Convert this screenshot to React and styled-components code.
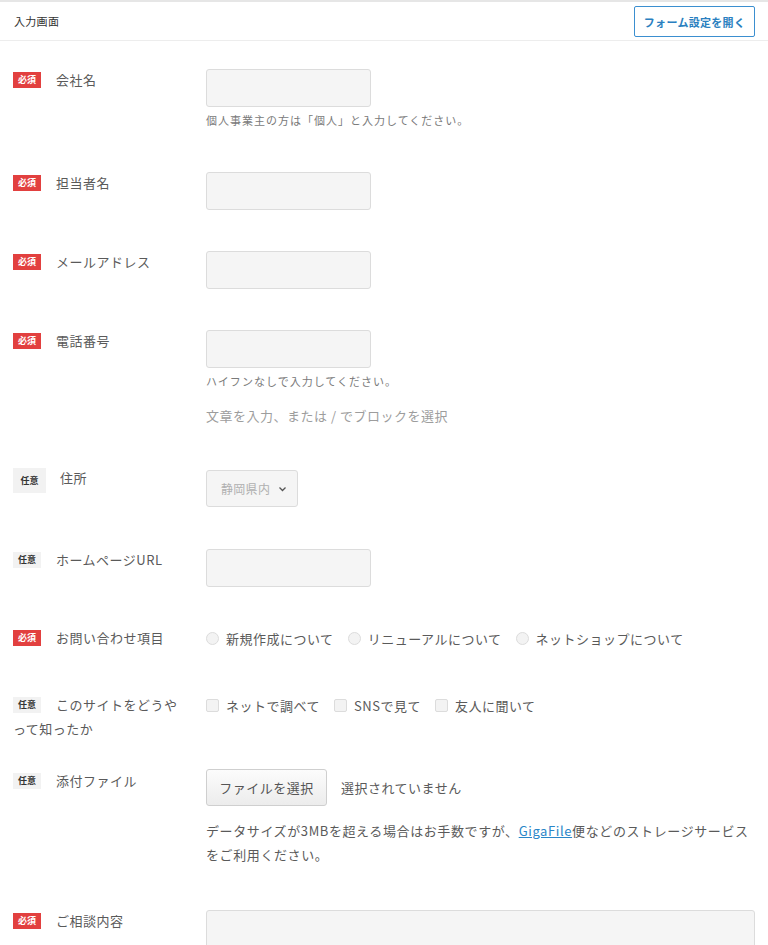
import React from "react";
import styled, { createGlobalStyle, css } from "styled-components";

const GlobalStyle = createGlobalStyle`
  html, body {
    margin: 0;
    padding: 0;
    background: #ffffff;
  }
  body {
    font-family: "Noto Sans CJK JP", "Noto Sans", sans-serif;
    color: #444;
  }
`;

const Header = styled.div`
  height: 38px;
  border-top: 2px solid #e6e6e6;
  border-bottom: 1px solid #ededed;
  display: flex;
  align-items: center;
  justify-content: space-between;
  padding: 0 13px 0 14px;
`;

const Title = styled.div`
  font-size: 11px;
  color: #333;
  letter-spacing: 0.3px;
`;

const OpenButton = styled.button`
  width: 121px;
  height: 31px;
  margin-top: 1px;
  border: 1px solid #3b8fd0;
  border-radius: 2px;
  background: #fff;
  color: #2a7fc0;
  font-family: inherit;
  font-size: 11px;
  font-weight: 700;
  letter-spacing: 0.3px;
  padding: 0;
`;

const Form = styled.div`
  display: flex;
  flex-direction: column;
  padding: 27px 13px 0 13px;
`;

const Row = styled.div`
  display: flex;
  align-items: flex-start;
  margin-bottom: ${(p) => p.$mb}px;
`;

const Label = styled.div`
  width: 175px;
  flex-shrink: 0;
  font-size: 13px;
  line-height: 24px;
  letter-spacing: 0.5px;
  color: #5a5a5a;
`;

const Badge = styled.span`
  display: inline-block;
  vertical-align: middle;
  width: 28px;
  height: 16px;
  line-height: 16px;
  margin: -3px 15px 0 0;
  text-align: center;
  font-size: 9px;
  font-weight: 700;
  letter-spacing: 0;
  ${(p) =>
    p.$required
      ? css`
          background: #e2403f;
          color: #fff;
        `
      : css`
          background: #f2f2f2;
          color: #333;
        `}
  ${(p) =>
    p.$large &&
    css`
      width: 33px;
      height: 25px;
      line-height: 25px;
      margin: 2px 14px 0 0;
      vertical-align: top;
    `}
`;

const Field = styled.div`
  flex: 1;
  margin-left: 18px;
  display: flex;
  flex-direction: column;
  align-items: flex-start;
`;

const TextInput = styled.div`
  width: 165px;
  height: 38px;
  box-sizing: border-box;
  margin-top: 1px;
  background: #f5f5f5;
  border: 1px solid #dcdcdc;
  border-radius: 3px;
`;

const Help = styled.div`
  margin-top: 4px;
  font-size: 11px;
  line-height: 18px;
  letter-spacing: 1px;
  color: #7a7a7a;
`;

const Placeholder = styled.div`
  margin-top: 15px;
  font-size: 13px;
  line-height: 22px;
  letter-spacing: 0.5px;
  color: #9d9d9d;
`;

const Select = styled.div`
  width: 92px;
  height: 37px;
  box-sizing: border-box;
  margin-top: 4px;
  background: #f5f5f5;
  border: 1px solid #dcdcdc;
  border-radius: 3px;
  display: flex;
  align-items: center;
  justify-content: space-between;
  padding: 0 10px 0 14px;
  font-size: 12px;
  letter-spacing: 0.3px;
  color: #b0b0b0;
`;

const Options = styled.div`
  display: flex;
  align-items: center;
  gap: 14px;
  height: 24px;
`;

const Option = styled.label`
  display: flex;
  align-items: center;
  gap: 7px;
  font-size: 13px;
  letter-spacing: 0.5px;
  color: #5a5a5a;
  white-space: nowrap;
`;

const Mark = styled.span`
  width: 13px;
  height: 13px;
  box-sizing: border-box;
  background: #f3f3f3;
  border: 1px solid #dcdcdc;
  border-radius: ${(p) => (p.$round ? "50%" : "2px")};
`;

const FileLine = styled.div`
  display: flex;
  align-items: center;
  gap: 14px;
  font-size: 13px;
  letter-spacing: 0.5px;
  color: #5a5a5a;
`;

const FileButton = styled.div`
  width: 121px;
  height: 37px;
  box-sizing: border-box;
  border: 1px solid #cfcfcf;
  border-radius: 3px;
  background: linear-gradient(#fcfcfc, #ececec);
  display: flex;
  align-items: center;
  justify-content: center;
  font-size: 13px;
  color: #555;
`;

const Note = styled.div`
  margin-top: 13px;
  font-size: 13px;
  line-height: 24px;
  letter-spacing: 0.6px;
  color: #5a5a5a;

  a {
    color: #2a86c8;
    text-decoration: underline;
  }
`;

const TextArea = styled.div`
  width: 100%;
  height: 120px;
  box-sizing: border-box;
  margin-top: 1px;
  background: #f5f5f5;
  border: 1px solid #dcdcdc;
  border-radius: 3px;
`;

function Chevron() {
  return (
    <svg width="9" height="6" viewBox="0 0 9 6">
      <path d="M1.5 1.5 L4.5 4.5 L7.5 1.5" fill="none" stroke="#555" strokeWidth="1.3" />
    </svg>
  );
}

export default function App() {
  return (
    <>
      <GlobalStyle />
      <Header>
        <Title>入力画面</Title>
        <OpenButton>フォーム設定を開く</OpenButton>
      </Header>
      <Form>
        <Row $mb={42}>
          <Label>
            <Badge $required>必須</Badge>会社名
          </Label>
          <Field>
            <TextInput />
            <Help>個人事業主の方は「個人」と入力してください。</Help>
          </Field>
        </Row>

        <Row $mb={40}>
          <Label>
            <Badge $required>必須</Badge>担当者名
          </Label>
          <Field>
            <TextInput />
          </Field>
        </Row>

        <Row $mb={40}>
          <Label>
            <Badge $required>必須</Badge>メールアドレス
          </Label>
          <Field>
            <TextInput />
          </Field>
        </Row>

        <Row $mb={39}>
          <Label>
            <Badge $required>必須</Badge>電話番号
          </Label>
          <Field>
            <TextInput />
            <Help>ハイフンなしで入力してください。</Help>
            <Placeholder>文章を入力、または / でブロックを選択</Placeholder>
          </Field>
        </Row>

        <Row $mb={41}>
          <Label>
            <Badge $large>任意</Badge>住所
          </Label>
          <Field>
            <Select>
              静岡県内
              <Chevron />
            </Select>
          </Field>
        </Row>

        <Row $mb={39}>
          <Label>
            <Badge>任意</Badge>ホームページURL
          </Label>
          <Field>
            <TextInput />
          </Field>
        </Row>

        <Row $mb={43}>
          <Label>
            <Badge $required>必須</Badge>お問い合わせ項目
          </Label>
          <Field>
            <Options>
              <Option>
                <Mark $round />
                新規作成について
              </Option>
              <Option>
                <Mark $round />
                リニューアルについて
              </Option>
              <Option>
                <Mark $round />
                ネットショップについて
              </Option>
            </Options>
          </Field>
        </Row>

        <Row $mb={28}>
          <Label>
            <Badge>任意</Badge>このサイトをどうやって知ったか
          </Label>
          <Field>
            <Options>
              <Option>
                <Mark />
                ネットで調べて
              </Option>
              <Option>
                <Mark />
                SNSで見て
              </Option>
              <Option>
                <Mark />
                友人に聞いて
              </Option>
            </Options>
          </Field>
        </Row>

        <Row $mb={42}>
          <Label>
            <Badge>任意</Badge>添付ファイル
          </Label>
          <Field>
            <FileLine>
              <FileButton>ファイルを選択</FileButton>
              選択されていません
            </FileLine>
            <Note>
              データサイズが3MBを超える場合はお手数ですが、<a href="#">GigaFile</a>便などのストレージサービスをご利用ください。
            </Note>
          </Field>
        </Row>

        <Row $mb={0}>
          <Label>
            <Badge $required>必須</Badge>ご相談内容
          </Label>
          <Field>
            <TextArea />
          </Field>
        </Row>
      </Form>
    </>
  );
}
